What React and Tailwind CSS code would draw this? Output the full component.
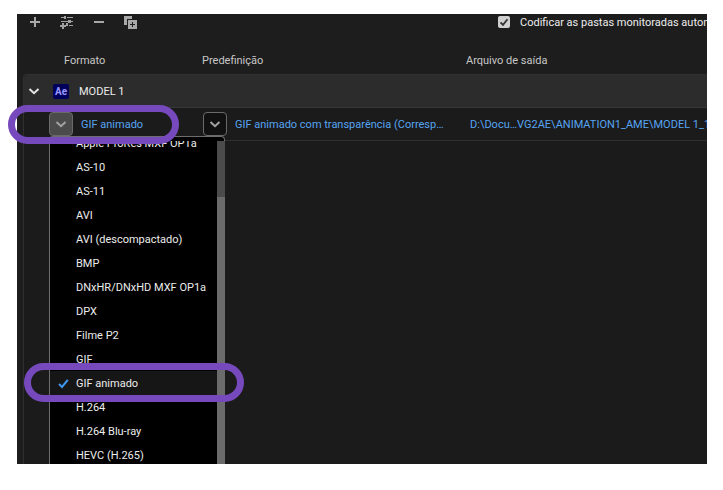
import { useState } from "react";

const FORMATS = [
  "Apple ProRes MXF OP1a",
  "AS-10",
  "AS-11",
  "AVI",
  "AVI (descompactado)",
  "BMP",
  "DNxHR/DNxHD MXF OP1a",
  "DPX",
  "Filme P2",
  "GIF",
  "GIF animado",
  "H.264",
  "H.264 Blu-ray",
  "HEVC (H.265)",
];

const PRESETS = ["GIF animado com transparência (Corresp…"];

function Chevron({ className }) {
  return (
    <svg viewBox="0 0 12 12" className={className} fill="none" stroke="currentColor" strokeWidth="2">
      <path d="M1.5 4 L6 8.2 L10.5 4" />
    </svg>
  );
}

function AddIcon() {
  return (
    <svg viewBox="0 0 10 10" className="w-2.5 h-2.5" fill="#a8a8a8">
      <path d="M4 0h2v4h4v2H6v4H4V6H0V4h4z" />
    </svg>
  );
}

function PresetIcon() {
  return (
    <svg viewBox="0 0 14 14" className="w-3.5 h-3.5" fill="#a0a0a0">
      <path d="M1 2h3v1H1zM4 1h2v3H4zM7 2h6v1H7zM1 6h7v1H1zM8 5h3v3H8zM11 6h2v1h-2zM6 8h2v3H6zM9 10h4v1H9z" />
      <path d="M2 8h2v2h2v2H4v2H2v-2H0v-2h2z" />
    </svg>
  );
}

function RemoveIcon() {
  return (
    <svg viewBox="0 0 10 10" className="w-2.5 h-2.5" fill="#a8a8a8">
      <path d="M0 4h10v2H0z" />
    </svg>
  );
}

function DuplicateIcon() {
  return (
    <svg viewBox="0 0 13 13" className="w-[13px] h-[13px]" fill="#a8a8a8">
      <path d="M0 0h8v3H3v6H0z" />
      <path fillRule="evenodd" d="M4 4h9v9H4zM8 6v2H6v1h2v2h1V9h2V8H9V6z" />
    </svg>
  );
}

function CellSelect({ label, value, options, onChange, open }) {
  return (
    <label className="relative flex items-center h-6 min-w-0">
      <span
        className={`absolute left-0 top-0 w-6 h-6 rounded border flex items-center justify-center pointer-events-none
          ${open ? "bg-[#4b4b4b] border-[#6a6a6a]" : "bg-[#111111] border-[#6a6a6a]"}`}
      >
        <Chevron className="w-3 h-3 text-[#a3a3a3]" />
      </span>
      <select
        aria-label={label}
        value={value}
        onChange={(e) => onChange(e.target.value)}
        className="relative appearance-none bg-transparent w-full h-6 pl-8 pt-0.5 text-[11px] leading-4 text-[#57a4f2] outline-none"
      >
        {options.map((o) => (
          <option key={o}>{o}</option>
        ))}
      </select>
    </label>
  );
}

function FormatMenu({ value, onSelect }) {
  return (
    <div className="absolute left-[25px] top-7 w-44 h-[340px] pt-1 flex bg-black border border-b-0 border-[#6e6e6e] rounded-t">
      <ul role="listbox" aria-label="Formato" className="flex-1 min-w-0 overflow-hidden">
        {FORMATS.map((f, i) => (
          <li
            key={f}
            role="option"
            aria-selected={f === value}
            onClick={() => onSelect(f)}
            className={`h-6 flex items-center pl-2 pt-0.5 text-[11px] leading-4 text-[#ececec] whitespace-nowrap
              ${i === 0 ? "-mt-2.5" : ""} ${f === value ? "bg-[#161616]" : ""}`}
          >
            <span className="w-[18px] shrink-0">
              {f === value && (
                <svg viewBox="0 0 11 11" className="w-[11px] h-[11px]" fill="none" stroke="#3d97f0" strokeWidth="2">
                  <path d="M1 5 L4 8 L9.8 0.8" />
                </svg>
              )}
            </span>
            {f}
          </li>
        ))}
      </ul>
      {/* scrollbar */}
      <div className="w-2 -mr-px bg-[#6b6b6b]">
        <div className="h-14 bg-[#4b4b4b]" />
      </div>
    </div>
  );
}

export default function App() {
  const [format, setFormat] = useState("GIF animado");
  const [preset, setPreset] = useState(PRESETS[0]);
  const [auto, setAuto] = useState(true);

  return (
    <div className="relative h-screen flex bg-white pt-3.5 pb-[26px] pl-[17px] pr-4 font-['Roboto','Noto_Sans',sans-serif] text-[11px] leading-4">
      <main className="flex-1 min-w-0 flex flex-col overflow-hidden bg-[#1d1d1d] text-[#dcdcdc]">
        <div className="flex items-center h-4 pl-[13px]">
          <div className="flex items-center gap-5">
            <button aria-label="Adicionar"><AddIcon /></button>
            <button aria-label="Adicionar predefinição"><PresetIcon /></button>
            <button aria-label="Remover"><RemoveIcon /></button>
            <button aria-label="Duplicar"><DuplicateIcon /></button>
          </div>
          <label className="ml-auto w-[209px] flex items-center gap-2.5 whitespace-nowrap text-[#ececec]">
            <span className="relative w-3 h-3 shrink-0">
              <input
                type="checkbox"
                checked={auto}
                onChange={(e) => setAuto(e.target.checked)}
                className="block appearance-none w-3 h-3 rounded-xs bg-[#d0d0d0]"
              />
              {auto && (
                <svg viewBox="0 0 12 12" className="absolute inset-0 pointer-events-none" fill="none" stroke="#333333" strokeWidth="1.8">
                  <path d="M2.5 6.3 L5 8.8 L9.5 3.2" />
                </svg>
              )}
            </span>
            <span className="pt-0.5">Codificar as pastas monitoradas autom</span>
          </label>
        </div>

        <div className="mt-4 h-7 pl-[47px] pt-0.5 grid grid-cols-[138px_264px_1fr] items-center text-[#c8c8c8]">
          <span>Formato</span>
          <span>Predefinição</span>
          <span>Arquivo de saída</span>
        </div>

        <section className="flex-1 ml-1.5 border-l border-t border-[#303030] rounded-tl bg-[#1b1b1b]">
          <div className="h-[33px] flex items-center bg-[#2c2c2c] border-b border-[#363636] rounded-tl pl-1">
            <button aria-label="Recolher MODEL 1">
              <Chevron className="w-3 h-3 text-[#e6e6e6]" />
            </button>
            <span className="ml-[13px] w-4 h-[15px] rounded-xs bg-[#00005b] text-[#9999ff] text-[10px] leading-[15px] font-bold text-center">
              Ae
            </span>
            <h2 className="ml-2.5 pt-0.5 text-[11px] leading-4 text-[#ececec]">MODEL 1</h2>
          </div>

          <div className="relative h-[33px] pl-[25px] grid grid-cols-[154px_267px_1fr] items-center border-b border-[#303030]">
            <CellSelect label="Formato" value={format} options={FORMATS} onChange={setFormat} open />
            <CellSelect label="Predefinição" value={preset} options={PRESETS} onChange={setPreset} />
            <a href="#saida" className="min-w-0 pt-0.5 whitespace-nowrap text-[#57a4f2]">
              D:\Docu…VG2AE\ANIMATION1_AME\MODEL 1_1.
            </a>
            <FormatMenu value={format} onSelect={setFormat} />
          </div>
        </section>
      </main>

      {/* highlight rings */}
      <div className="absolute left-2 top-[105px] w-[171px] h-[39px] rounded-full border-7 border-[#764abc] pointer-events-none" />
      <div className="absolute left-6 top-[363px] w-[220px] h-[39px] rounded-full border-7 border-[#764abc] pointer-events-none" />
    </div>
  );
}
